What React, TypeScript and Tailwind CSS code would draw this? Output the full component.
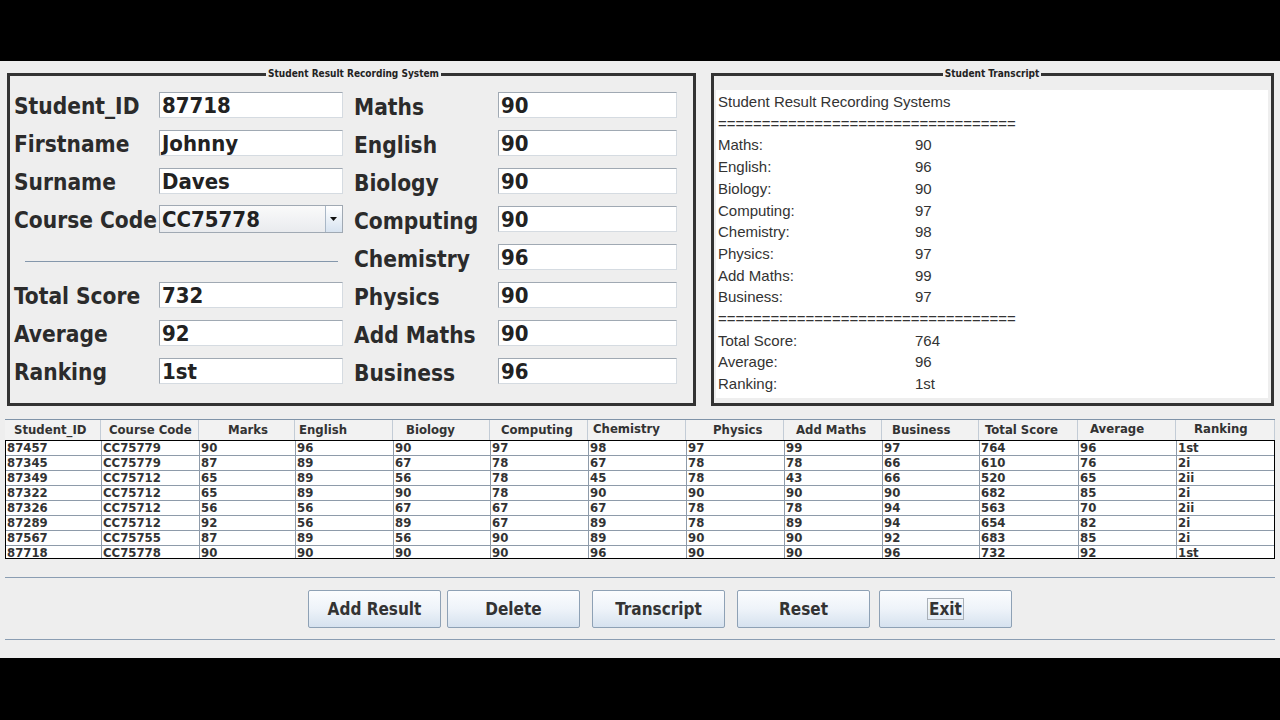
const swing = "font-['DejaVu_Sans_Condensed','DejaVu_Sans',sans-serif] [font-stretch:semi-condensed]";
const arial = "font-['Liberation_Sans',Arial,sans-serif]";

const leftRows = [
  { label: "Student_ID", value: "87718" },
  { label: "Firstname", value: "Johnny" },
  { label: "Surname", value: "Daves" },
  { label: "Course Code", value: "CC75778", combo: true },
  { label: "", value: "", divider: true },
  { label: "Total Score", value: "732" },
  { label: "Average", value: "92" },
  { label: "Ranking", value: "1st" },
];

const rightRows = [
  { label: "Maths", value: "90" },
  { label: "English", value: "90" },
  { label: "Biology", value: "90" },
  { label: "Computing", value: "90" },
  { label: "Chemistry", value: "96" },
  { label: "Physics", value: "90" },
  { label: "Add Maths", value: "90" },
  { label: "Business", value: "96" },
];

const transcript = [
  ["Maths:", "90"],
  ["English:", "96"],
  ["Biology:", "90"],
  ["Computing:", "97"],
  ["Chemistry:", "98"],
  ["Physics:", "97"],
  ["Add Maths:", "99"],
  ["Business:", "97"],
];

const equals = "==================================";

// header text offsets copied from the screenshot, the swing header isn't consistent
const columns = [
  { name: "Student_ID", pad: "pl-[9px]" },
  { name: "Course Code", pad: "pl-[8px]" },
  { name: "Marks", pad: "pl-[29px]" },
  { name: "English", pad: "pl-[4px]" },
  { name: "Biology", pad: "pl-[13px]" },
  { name: "Computing", pad: "pl-[11px]" },
  { name: "Chemistry", pad: "pl-[5px] pb-[3px]" },
  { name: "Physics", pad: "pl-[27px]" },
  { name: "Add Maths", pad: "pl-[12px]" },
  { name: "Business", pad: "pl-[10px]" },
  { name: "Total Score", pad: "pl-[6px]" },
  { name: "Average", pad: "pl-[12px] pb-[3px]" },
  { name: "Ranking", pad: "pl-[18px] pb-[3px]" },
];

const rows = [
  ["87457", "CC75779", "90", "96", "90", "97", "98", "97", "99", "97", "764", "96", "1st"],
  ["87345", "CC75779", "87", "89", "67", "78", "67", "78", "78", "66", "610", "76", "2i"],
  ["87349", "CC75712", "65", "89", "56", "78", "45", "78", "43", "66", "520", "65", "2ii"],
  ["87322", "CC75712", "65", "89", "90", "78", "90", "90", "90", "90", "682", "85", "2i"],
  ["87326", "CC75712", "56", "56", "67", "67", "67", "78", "78", "94", "563", "70", "2ii"],
  ["87289", "CC75712", "92", "56", "89", "67", "89", "78", "89", "94", "654", "82", "2i"],
  ["87567", "CC75755", "87", "89", "56", "90", "89", "90", "90", "92", "683", "85", "2i"],
  ["87718", "CC75778", "90", "90", "90", "90", "96", "90", "90", "96", "732", "92", "1st"],
];

const gridCols =
  "grid grid-cols-[96px_98px_96px_98px_97px_98px_98px_98px_98px_97px_99px_98px_99px]";

const buttons = [
  { text: "Add Result", gap: "ml-0" },
  { text: "Delete", gap: "ml-[6px]" },
  { text: "Transcript", gap: "ml-[12px]" },
  { text: "Reset", gap: "ml-[12px]" },
  { text: "Exit", gap: "ml-[9px]", focused: true },
];

const Field = ({ value, width }: { value: string; width: string }) => (
  <div
    className={`${width} h-[26px] bg-white border border-[#a0a9b3] border-b-[#d5dbe1] border-r-[#d5dbe1] pl-[2px] text-[22px] font-bold leading-[25px] text-[#222] overflow-hidden`}
  >
    {value}
  </div>
);

const Combo = ({ value }: { value: string }) => (
  <div className="w-[184px] h-[28px] -my-px flex border border-[#a0a9b3] bg-linear-to-b from-[#fafafa] to-[#e9ebee]">
    <div className="flex-1 pl-[2px] text-[22px] font-bold leading-[27px] text-[#222]">{value}</div>
    <div className="w-[17px] flex items-center justify-center border-l border-[#a9b7c6] bg-linear-to-b from-white to-[#d7e3f0]">
      <svg width="8" height="5" viewBox="0 0 8 5">
        <path d="M0 0H7L3.5 4Z" fill="#111" />
      </svg>
    </div>
  </div>
);

const Legend = ({ text }: { text: string }) => (
  <legend className={`${swing} mx-auto px-[2px] text-[10px] font-bold leading-[12px] text-[#222]`}>{text}</legend>
);

export default function App() {
  return (
    <div className="w-[1280px] h-[720px] overflow-hidden">
      <div className="h-[61px] bg-black" />
      <div className={`${swing} h-[597px] bg-[#eeeeee] flex flex-col text-[#333]`}>
        <div className="flex pt-[7px] pl-[7px] gap-[15px]">
          <fieldset className="w-[689px] h-[338px] border-[3px] border-[#333] pt-[12px] pl-[4px]">
            <Legend text="Student Result Recording System" />
            <div className="flex gap-[11px]">
              <div className="flex flex-col">
                {leftRows.map((r, i) => (
                  <div key={i} className="flex items-center h-[26px] mb-[12px]">
                    {r.divider ? (
                      <div className="self-start pt-[17px] pl-[11px]">
                        <div className="w-[313px] border-t border-[#8497ab]" />
                      </div>
                    ) : (
                      <>
                        <div className="w-[145px] pt-[3px] text-[22.5px] font-bold leading-none text-[#2b2b2b]">{r.label}</div>
                        {r.combo ? <Combo value={r.value} /> : <Field value={r.value} width="w-[184px]" />}
                      </>
                    )}
                  </div>
                ))}
              </div>
              <div className="flex flex-col">
                {rightRows.map((r) => (
                  <div key={r.label} className="flex items-center h-[26px] mb-[12px]">
                    <div className="w-[144px] pt-[4px] text-[22.5px] font-bold leading-none text-[#2b2b2b]">{r.label}</div>
                    <Field value={r.value} width="w-[179px]" />
                  </div>
                ))}
              </div>
            </div>
          </fieldset>

          <fieldset className="w-[563px] h-[338px] border-[3px] border-[#333] pt-[10px] pl-[2px] pr-[3px] pb-[5px]">
            <Legend text="Student Transcript" />
            <div className={`${arial} h-[308px] bg-white pl-[2px] pt-px text-[15px] leading-[21.7px] text-[#333]`}>
              <div>Student Result Recording Systems</div>
              <div>{equals}</div>
              {transcript.map(([k, v]) => (
                <div key={k} className="flex">
                  <span className="w-[197px]">{k}</span>
                  <span>{v}</span>
                </div>
              ))}
              <div>{equals}</div>
              <div className="flex">
                <span className="w-[197px]">Total Score:</span>
                <span>764</span>
              </div>
              <div className="flex">
                <span className="w-[197px]">Average:</span>
                <span>96</span>
              </div>
              <div className="flex">
                <span className="w-[197px]">Ranking:</span>
                <span>1st</span>
              </div>
            </div>
          </fieldset>
        </div>

        <div className="mt-[13px] mx-[5px] border-t border-[#7f93a8]">
          <div className={`${gridCols} h-[20px] bg-[#f2f2f2]`}>
            {columns.map((c) => (
              <div
                key={c.name}
                className={`${c.pad} flex items-center border-r border-[#c3ccd6] text-[13px] font-bold text-[#333] whitespace-nowrap overflow-hidden`}
              >
                {c.name}
              </div>
            ))}
          </div>
          <div className="h-[119px] overflow-hidden border border-black bg-white">
            {rows.map((row) => (
              <div key={row[0]} className={`${gridCols} h-[15px] border-b border-[#8e9baa]`}>
                {row.map((cell, i) => (
                  <div
                    key={i}
                    className="pl-px border-r border-[#8e9baa] text-[13px] font-bold leading-[14px] text-[#333] last:border-r-0"
                  >
                    {cell}
                  </div>
                ))}
              </div>
            ))}
          </div>
        </div>

        <div className="mt-[18px] mx-[5px] border-t border-[#8a9db2]" />
        <div className="mt-[12px] flex pl-[308px]">
          {buttons.map((b) => (
            <button
              key={b.text}
              className={`${b.gap} w-[133px] h-[38px] flex items-center justify-center rounded-[2px] border border-[#8ea1b5] bg-linear-to-b from-[#fbfcfe] via-[#eef3f9] to-[#d6e2ef] text-[17px] font-bold text-[#333]`}
            >
              <span className={b.focused ? "border border-[#a9b0b8] px-px leading-[20px]" : "leading-[20px]"}>
                {b.text}
              </span>
            </button>
          ))}
        </div>
        <div className="mt-[11px] mx-[5px] border-t border-[#8a9db2]" />
      </div>
      <div className="h-[62px] bg-black" />
    </div>
  );
}
